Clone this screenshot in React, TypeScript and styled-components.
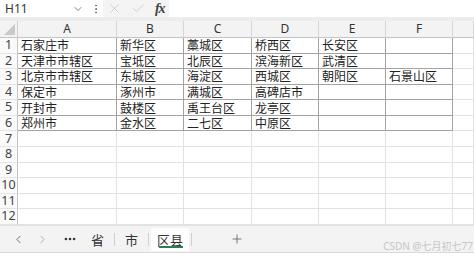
import React from "react";
import styled, { createGlobalStyle } from "styled-components";
import {
  ChevronDown,
  ChevronLeft,
  ChevronRight,
  Check,
  Ellipsis,
  EllipsisVertical,
  Plus,
  X,
} from "lucide-react";

const GlobalStyle = createGlobalStyle`
  html, body {
    margin: 0;
    padding: 0;
    background: #ffffff;
  }
  body {
    font-family: "Noto Sans", "Noto Sans CJK SC", sans-serif;
    color: #222;
  }
`;

const Window = styled.div`
  width: 474px;
  height: 257px;
  overflow: hidden;
  position: relative;
  display: flex;
  flex-direction: column;
  background: #ffffff;
`;

const FormulaBar = styled.div`
  height: 17px;
  flex-shrink: 0;
  display: flex;
  align-items: center;
  background: #ffffff;
  border-bottom: 4px solid #ececec;
`;

const NameBox = styled.div`
  width: 88px;
  height: 100%;
  display: flex;
  align-items: center;
  justify-content: space-between;
  padding: 0 4px 0 5px;
  box-sizing: border-box;
  font-size: 12px;
  line-height: 1;
  color: #333;
`;

const Dots = styled.div`
  width: 15px;
  display: flex;
  justify-content: center;
  color: #666;
`;

const FormulaTools = styled.div`
  width: 66px;
  height: 100%;
  display: flex;
  align-items: center;
  justify-content: space-around;
  background: #f4f4f4;
  color: #b8b8b8;
`;

const Fx = styled.span`
  font-family: "Liberation Serif", "DejaVu Serif", serif;
  font-style: italic;
  font-weight: bold;
  font-size: 14px;
  line-height: 1;
  color: #444;
  letter-spacing: -1px;
`;

const FormulaInput = styled.div`
  flex: 1;
  height: 100%;
  background: #ffffff;
`;

const Grid = styled.div`
  flex-shrink: 0;
  height: 204px;
  display: grid;
  grid-template-columns: 18px 99px 67px 68px 67px 67px 67px 1fr;
  grid-template-rows: 17px repeat(12, 15.58px);
`;

const Corner = styled.div`
  position: relative;
  background: #f3f3f3;
  border-right: 1px solid #d0d0d0;
  border-bottom: 1px solid #c4c4c4;
  box-sizing: border-box;
  &::after {
    content: "";
    position: absolute;
    right: 2px;
    bottom: 2px;
    border-style: solid;
    border-width: 0 0 11px 11px;
    border-color: transparent transparent #c9c9c9 transparent;
  }
`;

const ColHead = styled.div`
  background: #f3f3f3;
  border-right: 1px solid #d6d6d6;
  border-bottom: 1px solid #c4c4c4;
  box-sizing: border-box;
  display: flex;
  align-items: center;
  justify-content: center;
  font-size: 12px;
  line-height: 1;
  color: #333;
`;

const RowHead = styled.div`
  background: #fafafa;
  border-right: 1px solid #c4c4c4;
  border-bottom: 1px solid #e4e4e4;
  box-sizing: border-box;
  display: flex;
  align-items: center;
  justify-content: center;
  font-size: 12.5px;
  line-height: 1;
  color: #444;
`;

const Cell = styled.div<{ $data: boolean }>`
  border-right: 1px solid ${({ $data }) => ($data ? "#a3a3a3" : "#e2e2e2")};
  border-bottom: 1px solid ${({ $data }) => ($data ? "#a3a3a3" : "#e2e2e2")};
  box-sizing: border-box;
  min-height: 0;
  display: flex;
  align-items: center;
  padding-left: 3px;
  font-family: "Noto Sans CJK SC", sans-serif;
  font-size: 12px;
  line-height: 1;
  color: #222;
  white-space: nowrap;
`;

const TabBar = styled.div`
  height: 28px;
  flex-shrink: 0;
  display: flex;
  align-items: center;
  padding-left: 12px;
  background: #f3f3f3;
  border-top: 1px solid #e2e2e2;
  border-bottom: 1px solid #dadada;
  box-sizing: border-box;
  color: #555;
`;

const NavButton = styled.div<{ $w: number; $dim?: boolean }>`
  width: ${({ $w }) => $w}px;
  display: flex;
  justify-content: center;
  align-items: center;
  color: ${({ $dim }) => ($dim ? "#a0a0a0" : "#555")};
`;

const Spacer = styled.div<{ $w: number }>`
  width: ${({ $w }) => $w}px;
`;

const Tab = styled.div<{ $active?: boolean }>`
  height: 23px;
  padding: 0 ${({ $active }) => ($active ? "6px" : "8px")};
  display: flex;
  align-items: center;
  position: relative;
  font-family: "Noto Sans CJK SC", sans-serif;
  font-size: 13px;
  line-height: 1;
  color: #333;
  background: ${({ $active }) => ($active ? "#ffffff" : "transparent")};
  border-radius: 2px;
  &::after {
    content: "";
    display: ${({ $active }) => ($active ? "block" : "none")};
    position: absolute;
    left: 8px;
    right: 6px;
    bottom: 3px;
    height: 2px;
    background: #2e7d4f;
  }
`;

const TabSep = styled.div`
  width: 1px;
  height: 13px;
  margin: 0 2px;
  background: #cfcfcf;
`;

const AddTab = styled.div`
  margin-left: 36px;
  display: flex;
  align-items: center;
  color: #555;
`;

const Footer = styled.div`
  flex: 1;
  background: #ffffff;
`;

const Watermark = styled.div`
  position: absolute;
  right: 1px;
  top: 240px;
  font-family: "Noto Sans", "Noto Sans CJK SC", sans-serif;
  font-size: 10px;
  line-height: 1.2;
  color: #c6c6c6;
  white-space: nowrap;
`;

const columns = ["A", "B", "C", "D", "E", "F", ""];

const data: string[][] = [
  ["石家庄市", "新华区", "藁城区", "桥西区", "长安区", ""],
  ["天津市市辖区", "宝坻区", "北辰区", "滨海新区", "武清区", ""],
  ["北京市市辖区", "东城区", "海淀区", "西城区", "朝阳区", "石景山区"],
  ["保定市", "涿州市", "满城区", "高碑店市", "", ""],
  ["开封市", "鼓楼区", "禹王台区", "龙亭区", "", ""],
  ["郑州市", "金水区", "二七区", "中原区", "", ""],
];

export default function App() {
  const rows = Array.from({ length: 12 }, (_, i) => i);
  return (
    <Window>
      <GlobalStyle />
      <FormulaBar>
        <NameBox>
          <span>H11</span>
          <ChevronDown size={12} strokeWidth={1.5} color="#555" />
        </NameBox>
        <Dots>
          <EllipsisVertical size={12} strokeWidth={2} />
        </Dots>
        <FormulaTools>
          <X size={15} strokeWidth={1} />
          <Check size={15} strokeWidth={1} />
          <Fx>fx</Fx>
        </FormulaTools>
        <FormulaInput />
      </FormulaBar>

      <Grid>
        <Corner />
        {columns.map((c, i) => (
          <ColHead key={i}>{c}</ColHead>
        ))}
        {rows.map((r) => (
          <React.Fragment key={r}>
            <RowHead>{r + 1}</RowHead>
            {columns.map((_, c) => {
              const inData = r < 6 && c < 6;
              return (
                <Cell key={c} $data={inData}>
                  {inData ? data[r][c] : ""}
                </Cell>
              );
            })}
          </React.Fragment>
        ))}
      </Grid>

      <TabBar>
        <NavButton $w={13}>
          <ChevronLeft size={13} strokeWidth={1.5} />
        </NavButton>
        <Spacer $w={11} />
        <NavButton $w={13} $dim>
          <ChevronRight size={13} strokeWidth={1.5} />
        </NavButton>
        <Spacer $w={10} />
        <NavButton $w={22}>
          <Ellipsis size={14} strokeWidth={2.5} color="#333" />
        </NavButton>
        <Spacer $w={2} />
        <Tab>省</Tab>
        <TabSep />
        <Tab>市</Tab>
        <TabSep />
        <Tab $active>区县</Tab>
        <TabSep />
        <AddTab>
          <Plus size={14} strokeWidth={1.3} />
        </AddTab>
      </TabBar>
      <Footer />
      <Watermark>CSDN @七月初七77</Watermark>
    </Window>
  );
}
